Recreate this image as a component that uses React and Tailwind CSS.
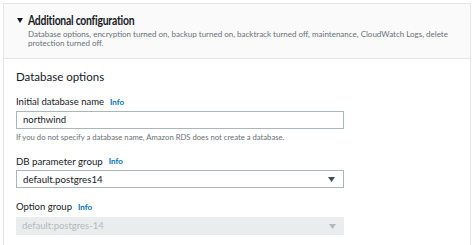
function Info() {
  return <span className="ml-[6px] text-[8px] font-bold leading-[12px] text-[#0073bb]">Info</span>;
}

function Caret({ muted }) {
  return (
    <svg width="7" height="5" viewBox="0 0 7 5" className={muted ? 'text-[#b4b9bc]' : 'text-[#414d5c]'}>
      <path d="M0 0 H7 L3.5 5 Z" fill="currentColor" />
    </svg>
  );
}

export default function App() {
  return (
    <div className="h-[245px] w-[474px] overflow-hidden bg-white pl-[3px] pt-[3px] font-['Lato','Open_Sans',sans-serif] text-[#16191f]">
      <div className="w-[468px] border border-[#e4e6e8]">
        <div className="border-b border-[#e4e6e8] bg-[#fafafa] px-[13px] pb-[10px] pt-[10px]">
          <div className="flex items-center gap-[5px]">
            <svg width="6" height="5" viewBox="0 0 6 5">
              <path d="M0 0 H6 L3 5 Z" fill="#16191f" />
            </svg>
            <span className="inline-block origin-left scale-x-[0.8] whitespace-nowrap text-[13px] font-bold leading-[13px] tracking-[-0.3px]">
              Additional configuration
            </span>
          </div>
          <p className="ml-[11px] mt-[3px] text-[8px] leading-[9px] text-[#687078]">
            Database options, encryption turned on, backup turned on, backtrack turned off, maintenance, CloudWatch Logs, delete
            <br />
            protection turned off.
          </p>
        </div>

        <div className="px-[12px] pb-[10px] pt-[10px]">
          <h2 className="text-[11.5px] leading-[16px] text-[#16191f]">Database options</h2>

          <div className="mt-[11px] flex items-center">
            <span className="text-[9.5px] leading-[12px]">Initial database name</span>
            <Info />
          </div>
          <div className="mt-[3px] flex h-[18px] w-[328px] items-center border border-[#aab7b8] px-[6px] text-[9.5px]">
            northwind
          </div>
          <p className="mt-[3px] text-[7.7px] leading-[10px] text-[#687078]">
            If you do not specify a database name, Amazon RDS does not create a database.
          </p>

          <div className="mt-[13px] flex items-center">
            <span className="text-[9.7px] leading-[12px]">DB parameter group</span>
            <Info />
          </div>
          <div className="mt-[3px] flex h-[18px] w-[328px] items-center justify-between border border-[#aab7b8] pl-[6px] pr-[8px] text-[9.7px]">
            <span>default.postgres14</span>
            <Caret />
          </div>

          <div className="mt-[13px] flex items-center">
            <span className="text-[9.5px] leading-[12px]">Option group</span>
            <Info />
          </div>
          <div className="mt-[4px] flex h-[18px] w-[328px] items-center justify-between bg-[#eaeded] pl-[6px] pr-[8px] text-[9.5px] text-[#b4b9bc]">
            <span>default:postgres-14</span>
            <Caret muted />
          </div>
        </div>
      </div>
    </div>
  );
}
